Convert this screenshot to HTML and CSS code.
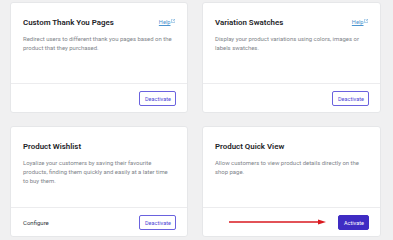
FILE: index.html
```html
<!DOCTYPE html>
<html>
<head>
<meta charset="utf-8">
<link rel="stylesheet" href="styles.css">
</head>
<body>
<div class="grid">
  <div class="card">
    <div class="body">
      <div class="head">
        <h3 class="title">Custom Thank You Pages</h3>
        <a class="help">Help<svg viewBox="0 0 10 10" width="4" height="4"><path d="M4 1H1v8h8V6M6 1h3v3M9 1L4.5 5.5" fill="none" stroke="currentColor" stroke-width="1.2"/></svg></a>
      </div>
      <p class="desc">Redirect users to different thank you pages based on the product that they purchased.</p>
    </div>
    <div class="foot">
      <span></span>
      <button class="btn outline">Deactivate</button>
    </div>
  </div>
  <div class="card">
    <div class="body">
      <div class="head">
        <h3 class="title">Variation Swatches</h3>
        <a class="help">Help<svg viewBox="0 0 10 10" width="4" height="4"><path d="M4 1H1v8h8V6M6 1h3v3M9 1L4.5 5.5" fill="none" stroke="currentColor" stroke-width="1.2"/></svg></a>
      </div>
      <p class="desc">Display your product variations using colors, images or labels swatches.</p>
    </div>
    <div class="foot">
      <span></span>
      <button class="btn outline">Deactivate</button>
    </div>
  </div>
  <div class="card">
    <div class="body">
      <div class="head">
        <h3 class="title">Product Wishlist</h3>
      </div>
      <p class="desc">Loyalize your customers by saving their favourite products, finding them quickly and easily at a later time to buy them.</p>
    </div>
    <div class="foot">
      <span class="config">Configure</span>
      <button class="btn outline">Deactivate</button>
    </div>
  </div>
  <div class="card">
    <div class="body">
      <div class="head">
        <h3 class="title">Product Quick View</h3>
      </div>
      <p class="desc">Allow customers to view product details directly on the shop page.</p>
    </div>
    <div class="foot">
      <svg class="arrow" viewBox="0 0 97 6" width="97" height="6"><path d="M0 3H91" stroke="#d9191f" stroke-width="1.4"/><path d="M89 0.5L97 3L89 5.5Z" fill="#d9191f"/></svg>
      <button class="btn solid">Activate</button>
    </div>
  </div>
</div>
</body>
</html>
```

FILE: styles.css
```css
html, body {
  margin: 0;
  padding: 0;
  background: #f0f0f1;
  font-family: Roboto, "Liberation Sans", Arial, sans-serif;
}
.grid {
  display: grid;
  grid-template-columns: 178px 179px;
  grid-template-rows: 111px 111px;
  column-gap: 14px;
  row-gap: 13px;
  padding: 2px 12px 0 10px;
}
.card {
  background: #fff;
  border: 1px solid #e6e7e9;
  border-radius: 3px;
  display: flex;
  flex-direction: column;
  box-sizing: border-box;
}
.body {
  flex: 1;
  padding: 14px 13px 0 12px;
}
.head {
  display: flex;
  justify-content: space-between;
  align-items: center;
  height: 10px;
}
.title {
  margin: 0;
  font-size: 7.9px;
  font-weight: 600;
  color: #1d2327;
}
.help {
  font-size: 5.7px;
  color: #4b94cf;
  text-decoration: underline;
  display: flex;
  align-items: flex-start;
  gap: 0.5px;
  margin-right: -1px;
}
.desc {
  margin: 7px 0 0 0;
  font-size: 5.95px;
  line-height: 9px;
  color: #80848a;
}
.foot {
  height: 29px;
  box-sizing: border-box;
  border-top: 1px solid #ececee;
  display: flex;
  align-items: center;
  justify-content: space-between;
  padding: 0 11px 0 12px;
}
.config {
  font-size: 6px;
  color: #2c3338;
}
.btn {
  font-family: inherit;
  font-size: 5.5px;
  height: 15px;
  padding: 0 5px;
  border-radius: 2px;
  margin: 0;
  box-sizing: border-box;
  margin-top: 1px;
}
.outline {
  background: #fff;
  border: 1px solid #6a62de;
  color: #4f46d6;
  width: 37px;
}
.solid {
  background: #3f2cc3;
  border: 1px solid #3f2cc3;
  color: #fff;
  width: 31px;
}
.arrow {
  margin-left: 14px;
}
```
